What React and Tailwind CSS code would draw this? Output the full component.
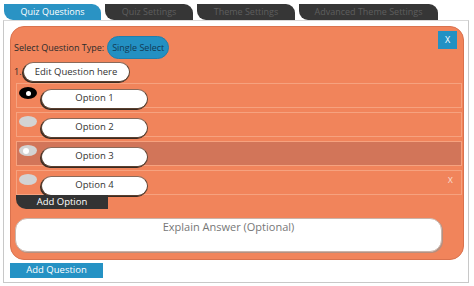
import React from "react";

const tabs = [
  { label: "Quiz Questions", w: "w-[97px]", active: true },
  { label: "Quiz Settings", w: "w-[88px]" },
  { label: "Theme Settings", w: "w-[98px]" },
  { label: "Advanced Theme Settings", w: "w-[139px]" },
];

const options = [
  { label: "Option 1", radio: "selected" },
  { label: "Option 2", radio: "empty" },
  { label: "Option 3", radio: "hover", dark: true },
  { label: "Option 4", radio: "empty", remove: true },
];

const Radio = ({ kind }) => {
  if (kind === "selected") {
    return (
      <div className="w-[18px] h-[12px] rounded-[50%] bg-black flex items-center justify-center">
        <div className="w-[5px] h-[5px] rounded-full bg-white" />
      </div>
    );
  }
  return (
    <div className="w-[18px] h-[11px] rounded-[50%] bg-[#d3d3d3] flex items-center pl-[4px]">
      {kind === "hover" && <div className="w-[6px] h-[6px] rounded-full bg-white" />}
    </div>
  );
};

const Pill = ({ children, w = "w-[107px]" }) => (
  <div
    className={`${w} h-[20px] rounded-full bg-white border border-[#5a4030] border-t-[#8a6a5a] flex items-center justify-center text-[9.5px] text-[#333] whitespace-nowrap shadow-[-1px_1px_0_#3a2a20]`}
  >
    {children}
  </div>
);

export default function App() {
  return (
    <div className="w-[474px] h-[286px] bg-white font-['Open_Sans',sans-serif] overflow-hidden">
      <div className="flex gap-[4px] pl-[4px] pt-[4px] h-[20px]">
        {tabs.map((t) => (
          <div
            key={t.label}
            className={`${t.w} h-[16px] rounded-tr-[9px] rounded-bl-[9px] flex items-center justify-center text-[9px] whitespace-nowrap ${
              t.active ? "bg-[#2a93c4] text-white" : "bg-[#363636] text-[#5e5e5e]"
            }`}
          >
            {t.label}
          </div>
        ))}
      </div>

      <div className="ml-[3px] w-[466px] h-[263px] border border-[#c8c8c8] border-t-[#d8d8d8] pt-[5px] pl-[6px]">
        <div className="w-[454px] h-[234px] bg-[#f1845b] border border-[#d9724e] rounded-[14px] flex flex-col pt-[4px] pl-[3px] pr-[2px]">
          <div className="flex items-start">
            <div className="flex items-center mt-[5px] gap-[3px]">
              <span className="text-[9px] text-[#2b2b2b] whitespace-nowrap">Select Question Type:</span>
              <div className="w-[62px] h-[23px] rounded-full bg-[#2390c2] border border-[#1f7fae] flex items-center justify-center text-[9px] text-[#123a55] whitespace-nowrap">
                Single Select
              </div>
            </div>
            <div className="ml-auto mr-[4px] w-[19px] h-[18px] bg-[#2391c4] flex items-center justify-center text-[9px] text-white">
              X
            </div>
          </div>

          <div className="flex items-center mt-[3px] gap-[1px]">
            <span className="text-[9px] text-[#2b2b2b]">1.</span>
            <Pill w="w-[107px]">Edit Question here</Pill>
          </div>

          <div className="flex flex-col gap-[4px] mt-[1px] pl-[2px]">
            {options.map((o) => (
              <div
                key={o.label}
                className={`h-[25px] w-[446px] border border-[#f6a27f] flex items-center pl-[2px] pr-[8px] ${
                  o.dark ? "bg-[#d27559] border-[#e89072]" : ""
                }`}
              >
                <div className="self-start mt-[3px]">
                  <Radio kind={o.radio} />
                </div>
                <div className="ml-[4px] mt-[6px]">
                  <Pill>{o.label}</Pill>
                </div>
                {o.remove && (
                  <span className="ml-auto -mt-[7px] text-[10px] text-[#f8d6c8]">x</span>
                )}
              </div>
            ))}
          </div>

          <div className="ml-[2px] w-[92px] h-[14px] bg-[#333333] rounded-bl-[10px] flex items-center justify-center text-[9.5px] text-white">
            Add Option
          </div>

          <div className="mt-[9px] ml-[1px] w-[427px] h-[34px] bg-white rounded-[12px] border border-[#c9b4aa] shadow-[1px_1px_0_#b58f80] flex justify-center text-[11px] text-[#777]">
            Explain Answer (Optional)
          </div>
        </div>

        <div className="mt-[3px] w-[93px] h-[15px] bg-[#2592c4] flex items-center justify-center text-[9.5px] text-white">
          Add Question
        </div>
      </div>
    </div>
  );
}
